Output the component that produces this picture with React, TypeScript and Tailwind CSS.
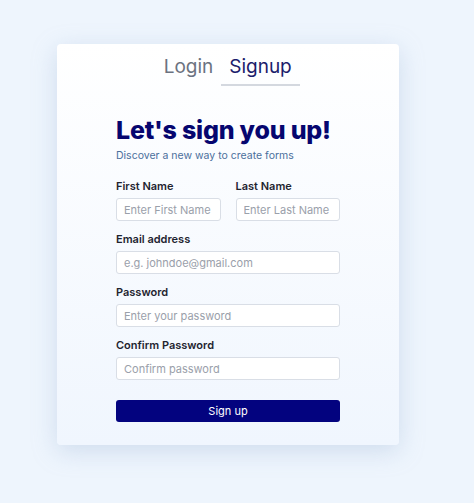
import { useState } from 'react';

const FONT = { fontFamily: 'Inter, "Noto Sans", sans-serif' };

function Field({ label, placeholder, type = 'text' }: { label: string; placeholder: string; type?: string }) {
  return (
    <label className="flex flex-col gap-[5px] min-w-0">
      <span className="text-[11px] leading-[14px] font-semibold text-[#1f2430]">{label}</span>
      <input
        type={type}
        placeholder={placeholder}
        className="h-[23px] w-full rounded-[3px] border border-[#d9dee6] bg-white px-[7px] text-[11px] text-gray-700 placeholder-[#9aa0aa] outline-none"
      />
    </label>
  );
}

export default function App() {
  const [tab, setTab] = useState<'login' | 'signup'>('signup');

  return (
    <div className="min-h-[503px] bg-[#eef5fd] pt-[44px] pl-[57px]" style={FONT}>
      <div className="w-[342px] h-[401px] rounded-[4px] bg-gradient-to-b from-white to-[#f0f6fe] shadow-[0_6px_24px_rgba(150,175,210,0.35)]">

        {/* Tabs */}
        <div className="flex justify-center pt-[6px]">
          <button
            onClick={() => setTab('login')}
            className={`w-[65px] h-[36px] text-[19px] leading-[30px] border-b-2 ${tab === 'login' ? 'text-[#1c1c6b] border-[#d4d8df]' : 'text-[#6b7280] border-transparent'}`}
          >
            Login
          </button>
          <button
            onClick={() => setTab('signup')}
            className={`w-[79px] h-[36px] text-[19px] leading-[30px] border-b-2 ${tab === 'signup' ? 'text-[#1c1c6b] border-[#d4d8df]' : 'text-[#6b7280] border-transparent'}`}
          >
            Signup
          </button>
        </div>

        {/* Form */}
        <div className="mx-auto w-[224px] pt-[28px]">
          <h1 className="text-[25px] leading-[32px] font-extrabold text-[#06066f] tracking-[-0.2px]">Let's sign you up!</h1>
          <p className="mt-[3px] text-[10.5px] leading-[14px] text-[#4b6f9c]">Discover a new way to create forms</p>

          <div className="mt-[16px] flex flex-col gap-[11px]">
            <div className="grid grid-cols-2 gap-[15px]">
              <Field label="First Name" placeholder="Enter First Name" />
              <Field label="Last Name" placeholder="Enter Last Name" />
            </div>
            <Field label="Email address" placeholder="e.g. johndoe@gmail.com" type="email" />
            <Field label="Password" placeholder="Enter your password" type="password" />
            <Field label="Confirm Password" placeholder="Confirm password" type="password" />
          </div>

          <button className="mt-[20px] h-[22px] w-full rounded-[3px] bg-[#03037f] text-[11px] text-white">
            Sign up
          </button>
        </div>
      </div>
    </div>
  );
}
